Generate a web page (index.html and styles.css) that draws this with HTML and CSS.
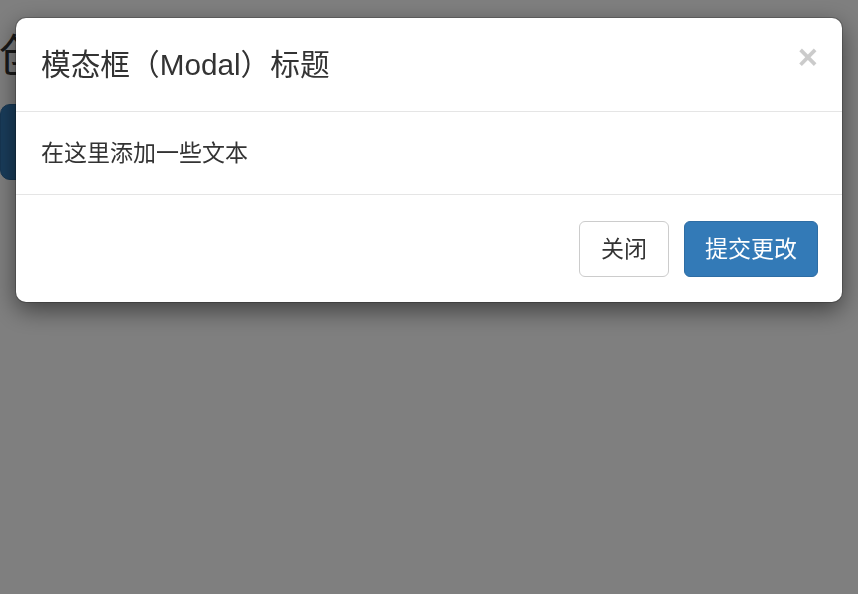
FILE: index.html
```html
<!DOCTYPE html>
<html lang="zh-CN">
<head>
<meta charset="utf-8">
<title>模态框</title>
<link rel="stylesheet" href="styles.css">
</head>
<body>
<div class="page">
  <h2 class="page-title">创建模态框（Modal）</h2>
  <button class="btn btn-primary btn-lg">开始演示模态框</button>
</div>
<div class="backdrop"></div>
<div class="modal">
  <div class="modal-dialog">
    <div class="modal-content">
      <div class="modal-header">
        <button class="close" type="button">&times;</button>
        <h4 class="modal-title">模态框（Modal）标题</h4>
      </div>
      <div class="modal-body">在这里添加一些文本</div>
      <div class="modal-footer">
        <button class="btn btn-default" type="button">关闭</button>
        <button class="btn btn-primary" type="button">提交更改</button>
      </div>
    </div>
  </div>
</div>
</body>
</html>
```
FILE: styles.css
```css
html, body {
  margin: 0;
  padding: 0;
  background: #fff;
  width: 858px;
  height: 594px;
  overflow: hidden;
  font-family: "Liberation Sans", "Noto Sans CJK SC", sans-serif;
  color: #333;
}
.page {
  display: flex;
  flex-direction: column;
  align-items: flex-start;
}
.page-title {
  margin: 30px 0 20px -1px;
  font-size: 45px;
  line-height: 54px;
  font-weight: 400;
  white-space: nowrap;
}
.btn {
  display: inline-block;
  font-family: "Liberation Sans", "Noto Sans CJK SC", sans-serif;
  font-size: 23px;
  line-height: 34px;
  padding: 10px 20px;
  border: 1px solid transparent;
  border-radius: 6px;
  cursor: pointer;
  white-space: nowrap;
}
.btn-lg {
  font-size: 30px;
  line-height: 40px;
  padding: 17px 26px;
  border-radius: 10px;
}
.btn-default {
  background: #fff;
  color: #333;
  border-color: #ccc;
}
.btn-primary {
  background: #337ab7;
  color: #fff;
  border-color: #2e6da4;
}
.backdrop {
  position: fixed;
  inset: 0;
  background: rgba(0, 0, 0, 0.5);
}
.modal {
  position: fixed;
  inset: 0;
}
.modal-dialog {
  margin: 18px 16px;
}
.modal-content {
  background: #fff;
  border-radius: 10px;
  box-shadow: 0 0 0 1px rgba(0, 0, 0, 0.2), 0 8px 25px rgba(0, 0, 0, 0.5);
}
.modal-header {
  padding: 26px 24px 25px 25px;
  border-bottom: 1px solid #e5e5e5;
}
.modal-title {
  margin: 0;
  font-size: 29.7px;
  line-height: 42px;
  font-weight: 400;
}
.close {
  float: right;
  margin-top: -4px;
  padding: 0;
  border: 0;
  background: transparent;
  font-family: "Liberation Sans", sans-serif;
  font-size: 34.6px;
  font-weight: bold;
  line-height: 1;
  color: #000;
  opacity: 0.2;
}
.modal-body {
  padding: 25px 24px 25px 25px;
  font-size: 23px;
  line-height: 32px;
}
.modal-footer {
  display: flex;
  justify-content: flex-end;
  gap: 15px;
  padding: 26px 24px 25px 24px;
  border-top: 1px solid #e5e5e5;
}
.modal-footer .btn-default {
  padding: 10px 21px;
}
```
